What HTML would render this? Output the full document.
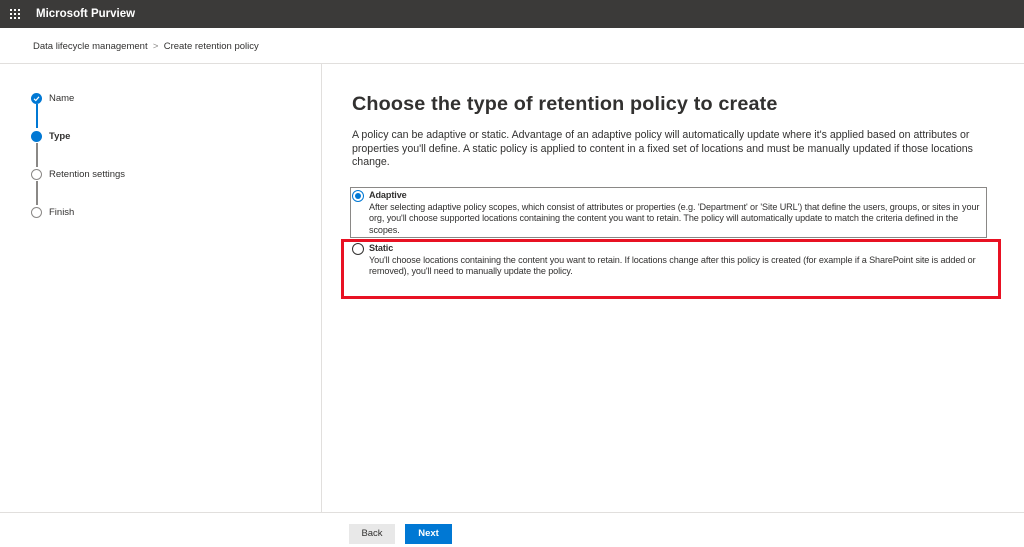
<!DOCTYPE html>
<html><head><style>
*{margin:0;padding:0;box-sizing:border-box}
body{width:1024px;height:547px;overflow:hidden;background:#fff;font-family:"Liberation Sans",sans-serif;color:#323130;position:relative}
.top{position:absolute;left:0;top:0;width:1024px;height:28px;background:#3b3a39;color:#fff}
.top b{position:absolute;left:36px;top:8px;font-size:11.5px}
.grid{position:absolute;left:10px;top:9px;width:10px;height:10px;display:grid;grid-template-columns:repeat(3,2px);gap:2px}
.grid i{width:2px;height:2px;background:#fff}
.bc{position:absolute;left:33px;top:41px;font-size:9.5px;color:#323130}
.hl{position:absolute;left:0;top:63px;width:1024px;height:1px;background:#e1dfdd}
.vl{position:absolute;left:321px;top:64px;width:1px;height:448px;background:#e1dfdd}
.bl{position:absolute;left:0;top:512px;width:1024px;height:1px;background:#e1dfdd}
.st{position:absolute;left:49px;font-size:9.5px}
.c{position:absolute;left:31px;width:11px;height:11px;border-radius:50%}
.ln{position:absolute;left:36px;width:1.5px}
h1{position:absolute;left:352px;top:93px;font-size:19.8px;font-weight:bold;color:#323130;letter-spacing:0.15px}
.p{position:absolute;left:352px;top:129px;width:648px;font-size:10.6px;line-height:13.5px}
.box{position:absolute;left:350px;top:187px;width:637px;height:51px;border:1px solid #8a8886}
.red{position:absolute;left:341px;top:239px;width:660px;height:60px;border:3px solid #e81123}
.r{position:absolute;width:12px;height:12px;border-radius:50%}
.t{position:absolute;left:369px;font-size:9.1px;line-height:11.5px;width:620px;letter-spacing:-0.1px}
.btn{position:absolute;top:524px;height:20px;font-size:9.5px;text-align:center;line-height:20px}
</style></head><body>
<div class="top"><div class="grid"><i></i><i></i><i></i><i></i><i></i><i></i><i></i><i></i><i></i></div><b>Microsoft Purview</b></div>
<div class="bc">Data lifecycle management &nbsp;<span style="color:#8a8886">&gt;</span>&nbsp; Create retention policy</div>
<div class="hl"></div><div class="vl"></div><div class="bl"></div>
<div class="ln" style="top:104px;height:24px;background:#0078d4"></div>
<div class="ln" style="top:143px;height:24px;background:#8a8886"></div>
<div class="ln" style="top:181px;height:24px;background:#8a8886"></div>
<div class="c" style="top:93px;background:#0078d4"><svg width="11" height="11" style="position:absolute;left:0;top:0"><path d="M3 5.8L4.8 7.5L8 3.8" stroke="#fff" stroke-width="1.2" fill="none"/></svg></div>
<div class="c" style="top:131px;background:#0078d4"></div>
<div class="c" style="top:169px;border:1px solid #8a8886;background:#fff"></div>
<div class="c" style="top:207px;border:1px solid #8a8886;background:#fff"></div>
<div class="st" style="top:93px">Name</div>
<div class="st" style="top:131px;font-weight:bold">Type</div>
<div class="st" style="top:169px">Retention settings</div>
<div class="st" style="top:207px">Finish</div>
<h1>Choose the type of retention policy to create</h1>
<div class="p">A policy can be adaptive or static. Advantage of an adaptive policy will automatically update where it's applied based on attributes or properties you'll define. A static policy is applied to content in a fixed set of locations and must be manually updated if those locations change.</div>
<div class="box"></div>
<div class="red"></div>
<div class="r" style="left:352px;top:190px;border:1px solid #0078d4;background:#fff"><div style="position:absolute;left:2px;top:2px;width:6px;height:6px;border-radius:50%;background:#0078d4"></div></div>
<div class="t" style="top:190px"><b>Adaptive</b><br>After selecting adaptive policy scopes, which consist of attributes or properties (e.g. 'Department' or 'Site URL') that define the users, groups, or sites in your org, you'll choose supported locations containing the content you want to retain. The policy will automatically update to match the criteria defined in the scopes.</div>
<div class="r" style="left:352px;top:243px;border:1px solid #323130;background:#fff"></div>
<div class="t" style="top:243px"><b>Static</b><br>You'll choose locations containing the content you want to retain. If locations change after this policy is created (for example if a SharePoint site is added or removed), you'll need to manually update the policy.</div>
<div class="btn" style="left:349px;width:46px;background:#e8e8e8">Back</div>
<div class="btn" style="left:405px;width:47px;background:#0078d4;color:#fff;font-weight:bold">Next</div>
</body></html>
